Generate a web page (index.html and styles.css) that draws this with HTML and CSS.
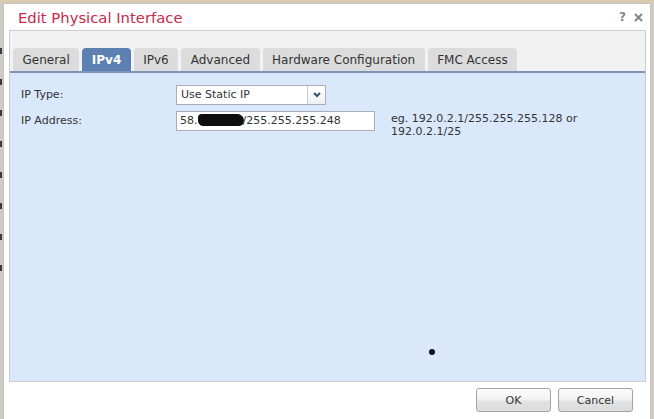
FILE: index.html
```html
<!DOCTYPE html>
<html lang="en">
<head>
    <meta charset="UTF-8">
    <meta name="viewport" content="width=device-width, initial-scale=1.0">
    <title>Edit Physical Interface</title>
    <link rel="stylesheet" href="styles.css">
</head>
<body>
    <div class="page">
        <!-- page content peeking out behind the dialog -->
        <div class="page-edge">
            <span class="edge-mark"></span>
            <span class="edge-mark"></span>
            <span class="edge-mark"></span>
            <span class="edge-mark"></span>
            <span class="edge-mark"></span>
            <span class="edge-mark"></span>
            <span class="edge-mark"></span>
            <span class="edge-mark"></span>
        </div>

        <div class="dialog">
            <div class="dialog-head">
                <div class="dialog-title">Edit Physical Interface</div>
                <div class="head-tools">
                    <span class="help">?</span>
                    <svg class="close" width="9" height="9" viewBox="0 0 9 9"><path d="M1 1L8 8M8 1L1 8" stroke="#858585" stroke-width="2" fill="none"/></svg>
                </div>
            </div>

            <div class="tabbox">
                <div class="tabs">
                    <div class="tab">General</div>
                    <div class="tab active">IPv4</div>
                    <div class="tab">IPv6</div>
                    <div class="tab">Advanced</div>
                    <div class="tab">Hardware Configuration</div>
                    <div class="tab">FMC Access</div>
                </div>

                <div class="panel">
                    <div class="field">
                        <div class="label">IP Type:</div>
                        <div class="select">
                            <div class="select-value">Use Static IP</div>
                            <div class="select-arrow">
                                <svg width="8" height="6" viewBox="0 0 8 6"><path d="M1 1L4 4L7 1" stroke="#3d4f6e" stroke-width="2" fill="none"/></svg>
                            </div>
                        </div>
                    </div>
                    <div class="field field-address">
                        <div class="label">IP Address:</div>
                        <div class="input">58.<span class="redact"></span>/255.255.255.248</div>
                        <div class="hint">eg. 192.0.2.1/255.255.255.128 or<br>192.0.2.1/25</div>
                    </div>
                    <div class="cursor-dot"></div>
                </div>
            </div>

            <div class="dialog-foot">
                <button class="btn">OK</button>
                <button class="btn">Cancel</button>
            </div>
        </div>
    </div>
</body>
</html>
```

FILE: styles.css
```css
body {
    margin: 0;
    font-family: "DejaVu Sans", Verdana, sans-serif;
    font-size: 11px;
    color: #333;
    background: #cfcbc3;
}
.page {
    display: flex;
    height: 419px;
    box-sizing: border-box;
    border-top: 3px solid #d8cbb0;
    overflow: hidden;
}
.page-edge {
    width: 3px;
    flex-shrink: 0;
    display: flex;
    flex-direction: column;
    gap: 25px;
    padding-top: 45px;
}
.edge-mark {
    width: 2px;
    height: 6px;
    background: #3a3a3a;
}
.dialog {
    flex: 1;
    margin-right: 3px;
    background: #fff;
    border: 1px solid #c4c4c4;
    border-bottom: none;
    display: flex;
    flex-direction: column;
}
.dialog-head {
    height: 26px;
    display: flex;
    align-items: center;
    padding: 0 7px 0 14px;
}
.dialog-title {
    flex: 1;
    font-size: 14.8px;
    color: #c8294b;
}
.head-tools {
    display: flex;
    align-items: center;
    gap: 8px;
}
.help {
    font-size: 12px;
    font-weight: bold;
    color: #858585;
}
.tabbox {
    margin: 0 4px 0 5px;
    border: 1px solid #cdcdcd;
    background: #f2f2f2;
}
.tabs {
    display: flex;
    gap: 3px;
    padding: 17px 0 0 3px;
    border-bottom: 2px solid #7b94b5;
}
.tab {
    height: 23px;
    line-height: 24px;
    padding: 0 9.5px;
    font-size: 12px;
    background: #dcdcdc;
    border-radius: 4px 4px 0 0;
    color: #333;
}
.tab.active {
    background: #5c80b2;
    color: #fff;
    font-weight: bold;
}
.panel {
    position: relative;
    height: 308px;
    box-sizing: border-box;
    padding: 12px 11px;
    background: #dae8fc;
}
.field {
    display: flex;
    align-items: flex-start;
}
.field-address {
    margin-top: 6px;
}
.label {
    width: 155px;
    line-height: 20px;
}
.select {
    width: 150px;
    height: 20px;
    box-sizing: border-box;
    display: flex;
    border: 1px solid #a9aeb6;
    background: #fff;
}
.select-value {
    flex: 1;
    padding-left: 4px;
    line-height: 18px;
}
.select-arrow {
    width: 17px;
    display: flex;
    align-items: center;
    justify-content: center;
    border-left: 1px solid #c8ccd2;
    background: linear-gradient(#fff, #eef1f5);
}
.input {
    width: 199px;
    height: 20px;
    box-sizing: border-box;
    padding-left: 3px;
    line-height: 18px;
    white-space: nowrap;
    border: 1px solid #a9aeb6;
    background: #fff;
}
.redact {
    display: inline-block;
    width: 46px;
    height: 12px;
    margin: 0 -1px 0 0;
    vertical-align: -2px;
    background: #0d0d0d;
    border-radius: 4px 7px 6px 6px;
}
.hint {
    margin-left: 16px;
    padding-top: 1px;
    line-height: 13px;
}
.cursor-dot {
    position: absolute;
    left: 419px;
    top: 276px;
    width: 6px;
    height: 6px;
    border-radius: 50%;
    background: #111;
}
.dialog-foot {
    display: flex;
    justify-content: flex-end;
    gap: 7px;
    padding: 6px 17px 0 0;
}
.btn {
    width: 75px;
    height: 24px;
    font-family: "DejaVu Sans", Verdana, sans-serif;
    font-size: 11px;
    color: #333;
    border: 1px solid #a3a3a3;
    border-radius: 3px;
    background: linear-gradient(#fcfcfc, #f1f1f1 50%, #e2e2e2 55%, #dcdcdc);
}
```
